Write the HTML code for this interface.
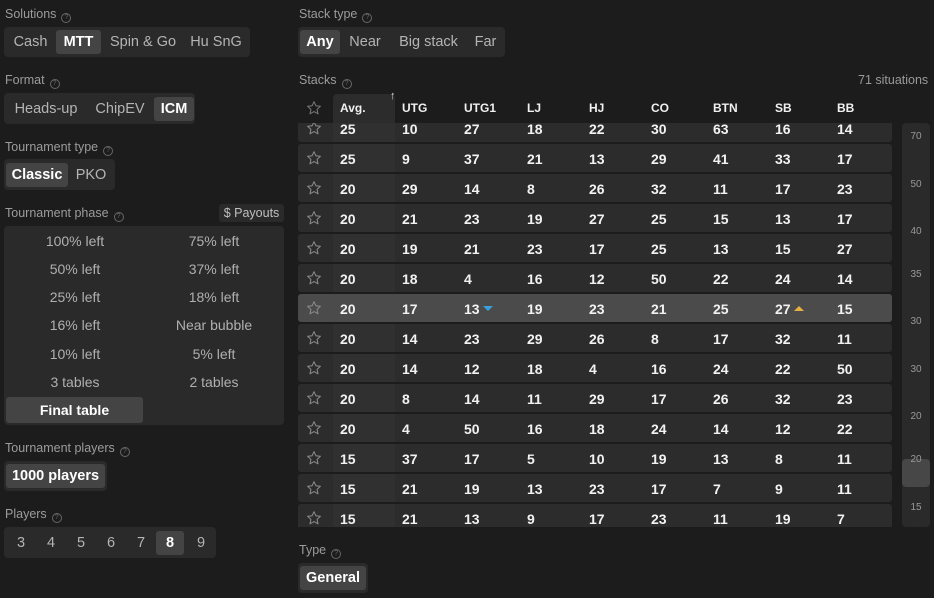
<!DOCTYPE html>
<html><head><style>
*{margin:0;padding:0;box-sizing:border-box}
body{width:934px;height:598px;background:#1c1c1c;font-family:"Liberation Sans",sans-serif;position:relative;overflow:hidden;color:#b0b0b0}
.a{position:absolute}
.lbl{position:absolute;font-size:12.5px;color:#9c9c9c}
.q{display:inline-block;width:10px;height:10px;border:1px solid #666;border-radius:50%;font-size:7px;line-height:8px;text-align:center;color:#666;margin-left:5px;vertical-align:-1px}
.grp{position:absolute;background:#2a2a2a;border-radius:4px;padding:3px 2px}
.grp div{position:absolute;top:3px;font-size:14.5px;color:#b4b4b4;height:24px;line-height:24px;border-radius:3px;white-space:nowrap;text-align:center}
.grp div.on{background:#444;color:#fff;font-weight:bold}
.ph{position:absolute;width:140px;text-align:center;font-size:14px;color:#b0b0b0}
.row{position:absolute;left:298px;width:594px;height:28px;background:#2c2c2c;border-radius:3px}
.row.hl{background:#4b4b4b}
.c{position:absolute;font-size:14px;font-weight:bold;color:#f2f2f2;top:7px}
.h{position:absolute;font-size:12px;font-weight:bold;color:#f0f0f0;top:101px}
.st{position:absolute;left:8px;top:6px}
.sl{position:absolute;font-size:10px;color:#999;left:902px;width:28px;text-align:center}
</style></head><body>
<div class="lbl" style="left:5px;top:7px">Solutions<span class="q">?</span></div>
<div class="grp" style="left:4px;top:27px;width:246px;height:30px"><div style="left:2px;width:49px">Cash</div><div class="on" style="left:52px;width:45px">MTT</div><div style="left:98px;width:82px">Spin &amp; Go</div><div style="left:181px;width:62px">Hu SnG</div></div>
<div class="lbl" style="left:5px;top:73px">Format<span class="q">?</span></div>
<div class="grp" style="left:4px;top:93px;width:191px;height:31px"><div style="left:2px;top:4px;width:80px">Heads-up</div><div style="left:83px;top:4px;width:66px">ChipEV</div><div class="on" style="left:150px;top:4px;width:40px">ICM</div></div>
<div class="lbl" style="left:5px;top:140px">Tournament type<span class="q">?</span></div>
<div class="grp" style="left:4px;top:159px;width:111px;height:31px"><div class="on" style="left:2px;top:4px;width:62px">Classic</div><div style="left:65px;top:4px;width:44px">PKO</div></div>
<div class="lbl" style="left:5px;top:206px">Tournament phase<span class="q">?</span></div>
<div class="a" style="left:219px;top:204px;width:65px;height:18px;background:#2a2a2a;border-radius:3px;font-size:12.5px;color:#c0c0c0;text-align:center;line-height:18px">$ Payouts</div>
<div class="a" style="left:4px;top:226px;width:280px;height:199px;background:#2a2a2a;border-radius:4px"></div>
<div class="ph" style="left:5px;top:233px">100% left</div><div class="ph" style="left:144px;top:233px">75% left</div>
<div class="ph" style="left:5px;top:261px">50% left</div><div class="ph" style="left:144px;top:261px">37% left</div>
<div class="ph" style="left:5px;top:289px">25% left</div><div class="ph" style="left:144px;top:289px">18% left</div>
<div class="ph" style="left:5px;top:317px">16% left</div><div class="ph" style="left:144px;top:317px">Near bubble</div>
<div class="ph" style="left:5px;top:346px">10% left</div><div class="ph" style="left:144px;top:346px">5% left</div>
<div class="ph" style="left:5px;top:374px">3 tables</div><div class="ph" style="left:144px;top:374px">2 tables</div>
<div class="a" style="left:6px;top:397px;width:137px;height:26px;background:#444;border-radius:3px;color:#fff;font-weight:bold;font-size:14px;text-align:center;line-height:26px">Final table</div>
<div class="lbl" style="left:5px;top:441px">Tournament players<span class="q">?</span></div>
<div class="grp" style="left:4px;top:461px;width:103px;height:30px"><div class="on" style="left:2px;width:99px">1000 players</div></div>
<div class="lbl" style="left:5px;top:507px">Players<span class="q">?</span></div>
<div class="grp" style="left:4px;top:527px;width:212px;height:31px"><div style="left:2px;top:4px;width:30px">3</div><div style="left:32px;top:4px;width:30px">4</div><div style="left:62px;top:4px;width:30px">5</div><div style="left:92px;top:4px;width:30px">6</div><div style="left:122px;top:4px;width:30px">7</div><div class="on" style="left:152px;top:4px;width:28px">8</div><div style="left:182px;top:4px;width:30px">9</div></div>

<div class="lbl" style="left:299px;top:7px">Stack type<span class="q">?</span></div>
<div class="grp" style="left:298px;top:27px;width:207px;height:30px"><div class="on" style="left:2px;width:40px">Any</div><div style="left:43px;width:48px">Near</div><div style="left:92px;width:77px">Big stack</div><div style="left:170px;width:35px">Far</div></div>
<div class="lbl" style="left:299px;top:73px">Stacks<span class="q">?</span></div>
<div class="lbl" style="left:858px;top:73px;color:#999">71 situations</div>
<div class="a" style="left:333px;top:94px;width:62px;height:29px;background:#2c2c2c;border-radius:4px 4px 0 0"></div>
<svg class="a" style="left:306px;top:100px" width="16" height="16" viewBox="0 0 24 24"><path d="M12 2.5l2.9 6.2 6.7.7-5 4.6 1.4 6.7L12 17.3l-6 3.4 1.4-6.7-5-4.6 6.7-.7z" fill="none" stroke="#777" stroke-width="1.6" stroke-linejoin="round"/></svg>
<div class="h" style="left:340px">Avg.</div>
<div class="a" style="left:390px;top:90px;font-size:11px;color:#ddd;font-weight:bold">↑</div>
<div class="h" style="left:402px">UTG</div><div class="h" style="left:464px">UTG1</div><div class="h" style="left:527px">LJ</div><div class="h" style="left:589px">HJ</div><div class="h" style="left:651px">CO</div><div class="h" style="left:713px">BTN</div><div class="h" style="left:775px">SB</div><div class="h" style="left:837px">BB</div>
<div id="tb" class="a" style="left:0;top:123px;width:934px;height:404px;overflow:hidden"></div>
<div class="a" style="left:902px;top:123px;width:28px;height:404px;background:#2a2a2a;border-radius:4px"></div>
<div class="a" style="left:902px;top:459px;width:28px;height:28px;background:#474747;border-radius:4px"></div>
<div class="sl" style="top:131px">70</div><div class="sl" style="top:179px">50</div><div class="sl" style="top:226px">40</div><div class="sl" style="top:269px">35</div><div class="sl" style="top:316px">30</div><div class="sl" style="top:364px">30</div><div class="sl" style="top:411px">20</div><div class="sl" style="top:454px">20</div><div class="sl" style="top:502px">15</div>
<div class="lbl" style="left:299px;top:543px">Type<span class="q">?</span></div>
<div class="grp" style="left:298px;top:563px;width:70px;height:30px"><div class="on" style="left:2px;width:66px">General</div></div>
<script>
var d=[[25,10,27,18,22,30,63,16,14],[25,9,37,21,13,29,41,33,17],[20,29,14,8,26,32,11,17,23],[20,21,23,19,27,25,15,13,17],[20,19,21,23,17,25,13,15,27],[20,18,4,16,12,50,22,24,14],[20,17,13,19,23,21,25,27,15],[20,14,23,29,26,8,17,32,11],[20,14,12,18,4,16,24,22,50],[20,8,14,11,29,17,26,32,23],[20,4,50,16,18,24,14,12,22],[15,37,17,5,10,19,13,8,11],[15,21,19,13,23,17,7,9,11],[15,21,13,9,17,23,11,19,7]];
var xs=[340,402,464,527,589,651,713,775,837],h='';
d.forEach(function(r,i){var t=-9+i*30;h+='<div class="row'+(i==6?' hl':'')+'" style="top:'+t+'px">'+(i==6?'':'<div style="position:absolute;left:35px;top:0;width:62px;height:28px;background:#303030"></div>')+'<svg class="st" width="16" height="16" viewBox="0 0 24 24"><path d="M12 2.5l2.9 6.2 6.7.7-5 4.6 1.4 6.7L12 17.3l-6 3.4 1.4-6.7-5-4.6 6.7-.7z" fill="none" stroke="#8a8a8a" stroke-width="1.6" stroke-linejoin="round"/></svg>';
r.forEach(function(v,j){var ex='';if(i==6&&j==2)ex='<span style="display:inline-block;margin-left:3px;width:0;height:0;border-left:5px solid transparent;border-right:5px solid transparent;border-top:5px solid #3aa0e0;vertical-align:3px"></span>';if(i==6&&j==7)ex='<span style="display:inline-block;margin-left:3px;width:0;height:0;border-left:5px solid transparent;border-right:5px solid transparent;border-bottom:5px solid #e8b040;vertical-align:3px"></span>';h+='<div class="c" style="left:'+(xs[j]-298)+'px">'+v+ex+'</div>'});h+='</div>'});
document.getElementById('tb').innerHTML=h;
</script>
</body></html>
